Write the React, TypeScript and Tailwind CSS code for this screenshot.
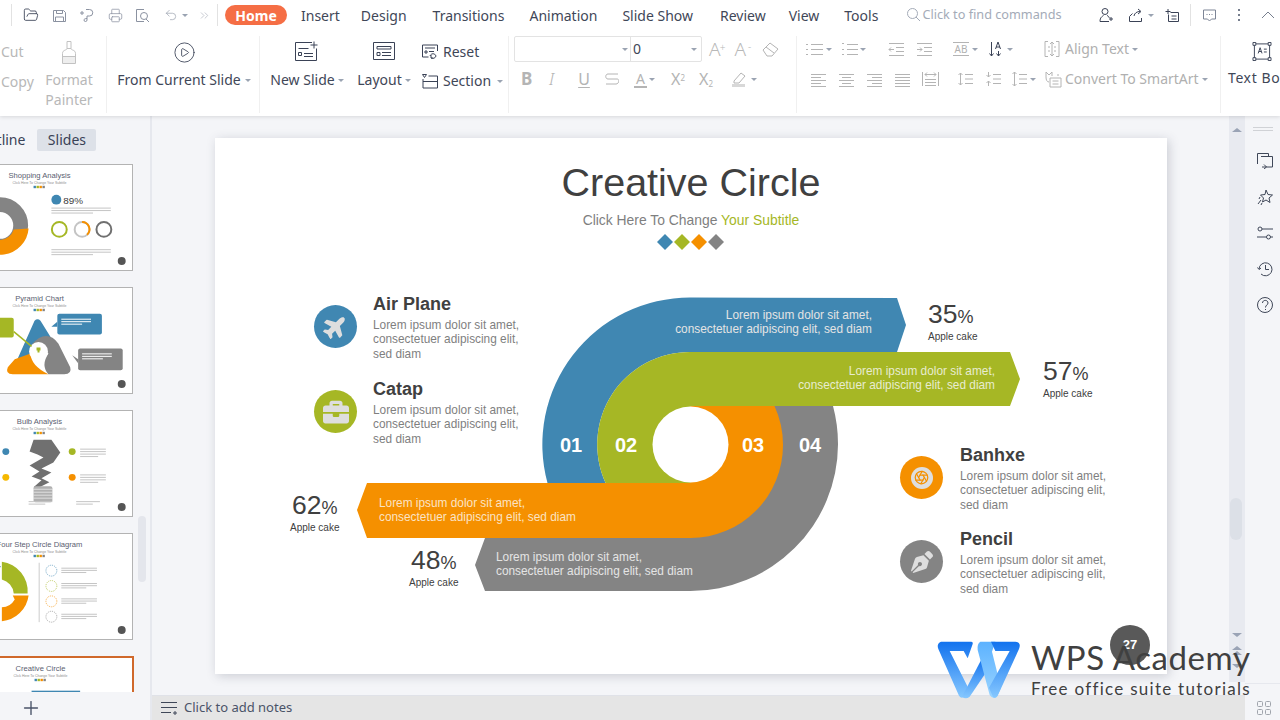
import { Aperture, ChevronsRight, CirclePlay, FolderOpen, Plus, Printer, Undo2 } from "lucide-react";
import { FaBriefcase, FaPenNib, FaPlane } from "react-icons/fa";
import type { ReactNode } from "react";

const SANS = "font-['Liberation_Sans',Arial,sans-serif]";
const LOREM_SHORT = ["Lorem ipsum dolor sit amet,", "consectetuer adipiscing elit, sed diam"];

function Caret({ className = "" }: { className?: string }) {
  return <span className={`inline-block w-0 h-0 border-x-[3px] border-x-transparent border-t-[3px] border-t-[#9aa3b2] ${className}`} />;
}

// small line icon, 16 box unless told otherwise
function Ic({ w = 16, h = 16, box, className = "", children }: { w?: number; h?: number; box?: string; className?: string; children: ReactNode }) {
  return (
    <svg width={w} height={h} viewBox={box ?? `0 0 ${w} ${h}`} fill="none" stroke="currentColor" strokeWidth="1" className={`shrink-0 ${className}`}>
      {children}
    </svg>
  );
}

function Lines({ rows, w = 16 }: { rows: [number, number, number][]; w?: number }) {
  return (
    <Ic w={w} h={16} className="text-[#b4b4b4]">
      {rows.map(([x1, x2, y]) => (
        <path key={`${x1}-${y}`} d={`M${x1} ${y}.5H${x2}`} />
      ))}
    </Ic>
  );
}

function Tabs() {
  const tabs: [string, string][] = [
    ["Insert", "ml-[14px]"],
    ["Design", "ml-[21px]"],
    ["Transitions", "ml-[26px]"],
    ["Animation", "ml-[25px]"],
    ["Slide Show", "ml-[25px]"],
    ["Review", "ml-[27px]"],
    ["View", "ml-[23px]"],
    ["Tools", "ml-[25px]"],
  ];
  return (
    <div className="flex items-center h-[30px] text-[14px] text-[#3f4758]">
      <div className="w-[12px] h-[22px] border-r border-[#e2e2e2]" />
      <div className="flex items-center gap-[12.500px] ml-[11px] text-[#3a4256]">
        <FolderOpen size={16} strokeWidth={1.3} />
        <Ic w={15} h={15} className="text-[#8b92a1]">
          <path d="M1.5 2.5h10l2 2v9h-12zM4.5 2.5v3h6v-3M3.5 13.500v-4.500h8v4.500" />
        </Ic>
        <Ic w={16} h={16} className="text-[#8b92a1]">
          <path d="M7 2.500h3.500a3 3 0 0 1 0 6.500H8v4a1.500 1.500 0 0 1-3 0c0-1 1-1.500 3-1.500M1 6h4M3 4v4" />
        </Ic>
        <Printer size={15} strokeWidth={1.2} className="text-[#8b92a1]" />
        <Ic w={15} h={15} className="text-[#8b92a1]">
          <path d="M9 1.500H1.500v12H9M14 14l-3-3" />
          <circle cx="9" cy="8" r="3.500" />
        </Ic>
      </div>
      <Undo2 size={14} strokeWidth={1.2} className="ml-[14px] text-[#9aa1ae]" />
      <Caret className="ml-[4px]" />
      <ChevronsRight size={13} strokeWidth={1} className="ml-[10px] text-[#9aa1ae]" />
      <div className="w-px h-[22px] bg-[#e2e2e2] ml-[6px]" />
      <div className="ml-[7px] w-[62px] h-[20px] rounded-full bg-[#f56e45] text-white font-bold flex items-center justify-center">Home</div>
      {tabs.map(([name, gap]) => (
        <span key={name} className={gap}>{name}</span>
      ))}
      <div className="flex items-center ml-[28px] text-[12.700px] text-[#a4abb8]">
        <Ic w={15} h={15} className="text-[#a4abb8]">
          <circle cx="6.500" cy="6.500" r="5" />
          <path d="M10 10l4 4" />
        </Ic>
        <span className="ml-px">Click to find commands</span>
      </div>
      <div className="flex items-center ml-auto text-[#3a4256]">
        <Ic w={16} h={16}>
          <circle cx="7" cy="4.500" r="3" />
          <path d="M2 14.500c0-4 2-5 3.500-6M9 8.500c1.500.5 2 1.500 2.300 2.500M2 14.500h9M13 10v4M11 12h4" />
        </Ic>
        <Ic w={16} h={16} className="ml-[14px]">
          <path d="M1.500 14.500v-5l3-3M1.500 14.500h12V11M6 9c.5-3 3-4.500 6-4.500M10 2l3 2.500L10 7" />
        </Ic>
        <Caret className="ml-[4px]" />
        <Ic w={15} h={15} className="ml-[11px]">
          <path d="M5.500 4.500h8v9h-10v-7M6.500 8h5M6.500 11h5M3 1v5M.5 3.500h5" />
        </Ic>
        <div className="w-px h-[22px] bg-[#e2e2e2] ml-[10px]" />
        <Ic w={15} h={15} className="ml-[11px] text-[#7d8596]">
          <path d="M1.500 2h12v9h-4l-2 2-2-2h-4z" />
          <path d="M4.500 6.500h1M7 6.500h1M9.500 6.500h1" />
        </Ic>
        <span className="ml-[21px] flex flex-col gap-[3px]">
          <span className="w-[2px] h-[2px] bg-[#767e8e]" />
          <span className="w-[2px] h-[2px] bg-[#767e8e]" />
          <span className="w-[2px] h-[2px] bg-[#767e8e]" />
        </span>
        <Ic w={14} h={14} className="ml-[21px] mr-[5px] text-[#767e8e]">
          <path d="M1 10l6-6 6 6" />
        </Ic>
      </div>
    </div>
  );
}

function Ribbon() {
  const dim = "text-[#b8b8b8]";
  return (
    <div className="flex h-[86px] text-[14px] leading-[20px] text-[#3f4758] pt-[6px] pb-[3px]">
      {/* clipboard */}
      <div className={`flex w-[107px] shrink-0 border-r border-[#f0f0f0] ${dim}`}>
        <div className="w-[42px] pl-px pt-[6px]">
          <div>Cut</div>
          <div className="mt-[10px]">Copy</div>
        </div>
        <div className="w-[54px] flex flex-col items-center pt-[5px]">
          <Ic w={16} h={24} className="text-[#c2c2c2]">
            <path d="M6 .5h4v7H6zM6 7.500c0 2-4.500 1-4.500 5v10h13v-10c0-4-4.500-3-4.500-5M1.500 15.500h13" />
            <path d="M2 16h12v6H2z" fill="#eeeeee" stroke="none" />
          </Ic>
          <div className="mt-[5px] text-center">Format<br />Painter</div>
        </div>
      </div>
      {/* from current slide */}
      <div className="flex flex-col items-center w-[153px] shrink-0 border-r border-[#f0f0f0] pl-[2px]">
        <CirclePlay size={23} strokeWidth={0.9} className="text-[#3a4256] mt-[5px]" />
        <div className="mt-[6px] flex items-center">From Current Slide<Caret className="ml-[4px]" /></div>
      </div>
      {/* slides */}
      <div className="flex w-[249px] shrink-0 border-r border-[#f0f0f0]">
        <div className="flex flex-col items-center w-[86px] pl-[8px] pt-[5px]">
          <Ic w={24} h={20} className="text-[#3a4256]">
            <path d="M17 1.500H.5v18h21v-12M3.500 7.500h10M3.500 11.500h3v3h-3zM9 12.500h9M9 15.500h9" />
            <path d="M19 .5v7M15.500 4h7" />
          </Ic>
          <div className="mt-[9px] flex items-center whitespace-nowrap">New Slide<Caret className="ml-[3px]" /></div>
        </div>
        <div className="flex flex-col items-center w-[64px] pl-[12px] pt-[6px]">
          <Ic w={22} h={18} className="text-[#3a4256]">
            <path d="M.5.5h21v17H.5zM4 4.500h14v2.500H4zM4 10.500h3v3H4zM9 10.500h9M9 13.500h9" />
          </Ic>
          <div className="mt-[10px] flex items-center">Layout<Caret className="ml-[3px]" /></div>
        </div>
        <div className="pl-[12px] pt-[6px]">
          <div className="flex items-center gap-[5px]">
            <Ic w={16} h={16} className="text-[#3a4256]">
              <path d="M15.500 7V1H.5v12h6M3 4h10M3 7h2v2H3zM7 7.500h5M8 12c1-3 5-3 6 0-.5 2-3 3-5 2M9 11v3h2" />
            </Ic>
            Reset
          </div>
          <div className="flex items-center gap-[5px] mt-[9px]">
            <Ic w={16} h={16} className="text-[#3a4256]">
              <path d="M.5 1.500h4L2.500 4.500zM6.500 3h9v12H1V6M1 8.500h14" />
            </Ic>
            Section<Caret className="ml-[1px]" />
          </div>
        </div>
      </div>
      {/* font */}
      <div className="w-[288px] shrink-0 border-r border-[#f0f0f0] pl-[5px] text-[#b0b0b0]">
        <div className="flex items-center">
          <div className="flex w-[188px] h-[26px] border border-[#e3e3e3] rounded-[2px]">
            <div className="w-[116px] border-r border-[#e3e3e3] flex items-center justify-end pr-[2px]"><Caret /></div>
            <div className="flex-1 flex items-center justify-between pl-[2px] pr-[4px] text-[14px] text-[#3f4758]">0<Caret /></div>
          </div>
          <span className={`ml-[7px] text-[19px] font-light ${dim} relative`}>A<span className="absolute -top-[2px] -right-[5px] text-[10px]">+</span></span>
          <span className={`ml-[14px] text-[19px] font-light ${dim} relative`}>A<span className="absolute -top-[3px] -right-[5px] text-[10px]">-</span></span>
          <Ic w={17} h={15} className="ml-[16px] text-[#b4b4b4]">
            <path d="M1 8l7-7 8 6-6 7H5zM4 5l8 6" />
          </Ic>
        </div>
        <div className="flex items-center mt-[3px] h-[28px] text-[#b4b4b4]">
          <span className="w-[26px] pl-[7px] text-[17px] font-bold">B</span>
          <span className="w-[30px] pl-[9px] text-[17px] italic font-light">I</span>
          <span className="w-[28px] text-center text-[16px] underline underline-offset-[2px]">U</span>
          <span className="w-[28px] flex justify-center">
            <Ic w={14} h={14}><path d="M13 2H3c-3 0-3 5 0 5h9c3 0 2 5-1 5H1" /></Ic>
          </span>
          <span className="flex items-center w-[36px] pl-[8px]">
            <span className="text-[14px] border-b-[2px] border-[#b4b4b4] leading-[15px] px-[2px]">A</span>
            <Caret className="ml-[2px]" />
          </span>
          <span className="w-[28px] text-center text-[16px] ml-[2px]">X<sup className="text-[8px]">2</sup></span>
          <span className="w-[28px] text-center text-[16px]">X<sub className="text-[8px]">2</sub></span>
          <Ic w={17} h={16} className="ml-[11px]">
            <path d="M3 10l7-8 4 3-6 7H3zM1 15.500h13" />
            <path d="M1 13h13v3H1z" fill="#d8d8d8" stroke="none" />
          </Ic>
          <Caret className="ml-[3px]" />
        </div>
      </div>
      {/* paragraph */}
      <div className="w-[424px] shrink-0 border-r border-[#f0f0f0] text-[#b0b0b0]">
        <div className="flex items-center h-[26px]">
          <span className="ml-[8px]"><Lines w={18} rows={[[6, 18, 3], [6, 18, 8], [6, 18, 13], [1, 3, 3], [1, 3, 8], [1, 3, 13]]} /></span>
          <Caret className="ml-[3px]" />
          <span className="ml-[9px]"><Lines w={17} rows={[[6, 17, 3], [6, 17, 8], [6, 17, 13], [1, 3, 2], [1, 3, 8], [1, 3, 13]]} /></span>
          <Caret className="ml-[2px]" />
          <span className="ml-[22px]"><Ic w={16} h={16} className="text-[#b4b4b4]"><path d="M1 2.500h15M8 6.500h8M8 10.500h8M1 14.500h15M6 8.500H1M3 6.500l-2 2 2 2" /></Ic></span>
          <span className="ml-[12px]"><Ic w={16} h={16} className="text-[#b4b4b4]"><path d="M1 2.500h15M8 6.500h8M8 10.500h8M1 14.500h15M1 8.500h5M4 6.500l2 2-2 2" /></Ic></span>
          <span className="ml-[21px] w-[16px] border-y border-[#b4b4b4] text-[10px] leading-[12px] text-center">AB</span>
          <Caret className="ml-[3px]" />
          <span className="ml-[11px]">
            <Ic w={15} h={16} className="text-[#3a4256]"><path d="M2.500 1v14M.5 12.500l2 2.500 2-2.500M9 1l-2.500 7M9 1l2.500 7M7 6h4M9.500 10v5M7.500 12.500l2 2.500 2-2.500" /></Ic>
          </span>
          <Caret className="ml-[3px] border-t-[#5a6376]" />
          <span className="ml-[31px]"><Ic w={16} h={18} className="text-[#b4b4b4]"><path d="M4 1.500H1v15h3M12 1.500h3v15h-3M8 2v14M6 4l2-2 2 2M6 14l2 2 2-2M4 7h2M10 7h2M4 11h2M10 11h2" /></Ic></span>
          <span className="ml-[5px] text-[14px]">Align Text</span>
          <Caret className="ml-[3px]" />
        </div>
        <div className="flex items-center h-[28px] mt-[3px]">
          <span className="ml-[13px]"><Lines rows={[[1, 16, 3], [1, 11, 6], [1, 16, 9], [1, 11, 12], [1, 16, 15]]} /></span>
          <span className="ml-[12px]"><Lines rows={[[1, 16, 3], [4, 13, 6], [1, 16, 9], [4, 13, 12], [1, 16, 15]]} /></span>
          <span className="ml-[12px]"><Lines rows={[[1, 16, 3], [6, 16, 6], [1, 16, 9], [6, 16, 12], [1, 16, 15]]} /></span>
          <span className="ml-[12px]"><Lines rows={[[1, 16, 3], [1, 16, 6], [1, 16, 9], [1, 16, 12], [1, 16, 15]]} /></span>
          <span className="ml-[12px]"><Ic w={17} h={16} className="text-[#b4b4b4]"><path d="M.5 1v14M16.500 1v14M3 8.500h11M3 11.500h11M3 14.500h11M3 3.500h11M5 1.500l-2 2 2 2M12 1.500l2 2-2 2" /></Ic></span>
          <span className="ml-[19px]"><Ic w={15} h={16} className="text-[#b4b4b4]"><path d="M2.500 2v12M.5 4l2-2 2 2M.5 12l2 2 2-2M7 3.500h8M7 8h8M7 12.500h8" /></Ic></span>
          <span className="ml-[13px]"><Ic w={15} h={16} className="text-[#b4b4b4]"><path d="M2.500 1v5M.5 4l2 2 2-2M2.500 10v5M.5 12l2-2 2 2M7 3.500h8M7 8h8M7 12.500h8" /></Ic></span>
          <span className="ml-[11px]"><Ic w={15} h={16} className="text-[#b4b4b4]"><path d="M2.500 1v14M.5 3l2-2 2 2M.5 13l2 2 2-2M7 3.500h8M7 8h8M7 12.500h8" /></Ic></span>
          <Caret className="ml-[3px]" />
          <span className="ml-[9px]"><Ic w={17} h={17} className="text-[#b4b4b4]"><path d="M1 6V1l3 3 3-3v4M13 5V3M5 7h11v9H5V7M7.500 10h6M7.500 13h6M1 6c0 3 1 5 3 5" /></Ic></span>
          <span className="ml-[3px] text-[14px] whitespace-nowrap">Convert To SmartArt</span>
          <Caret className="ml-[3px]" />
        </div>
      </div>
      {/* text box, cut off by the window */}
      <div className="flex flex-col items-start pl-[7px] w-[59px] overflow-hidden">
        <Ic w={20} h={19} className="ml-[24px] text-[#3a4256] mt-[6px]" box="0 0 20 20">
          <path d="M2 2h16v16H2z" />
          <path d="M.5.5h3v3h-3zM16.500.5h3v3h-3zM.5 16.500h3v3h-3zM16.500 16.500h3v3h-3z" fill="#ffffff" />
          <path d="M6 12l2-6 2 6M6.700 10h2.600M12 7.500h3M12 10.500h3" />
        </Ic>
        <div className="mt-[7px] whitespace-nowrap tracking-[0.600px]">Text Box</div>
      </div>
    </div>
  );
}

function ThumbHead({ title, x = 93 }: { title: string; x?: number }) {
  const dots = ["#3f87b2", "#a5b725", "#f59000", "#848484"];
  return (
    <>
      <text x={x} y="13" textAnchor="middle" fontSize="7.700" fill="#5a6070" fontFamily="Liberation Sans">{title}</text>
      <text x={x} y="19" textAnchor="middle" fontSize="3.500" fill="#8c8c8c" fontFamily="Liberation Sans">Click Here To Change Your Subtitle</text>
      {dots.map((c, i) => (
        <rect key={c} x={x - 6 + i * 3} y="21" width="2.400" height="2.400" fill={c} />
      ))}
    </>
  );
}

function Greeked({ x, y, w, n = 3, gap = 2.500, c = "#c4c4c4" }: { x: number; y: number; w: number; n?: number; gap?: number; c?: string }) {
  return (
    <>
      {Array.from({ length: n }, (_, i) => (
        <rect key={i} x={x} y={y + i * gap} width={i === n - 1 ? w * 0.7 : w} height="1" fill={c} />
      ))}
    </>
  );
}

function Thumb({ active, children }: { active?: boolean; children: ReactNode }) {
  return (
    <div className={`h-[107px] bg-white shrink-0 ${active ? "border-2 border-[#d0692b] w-[188px]" : "border border-[#b3b3b3] w-[187px]"}`}>
      <svg viewBox="0 0 186 106" width="185" height="105" className="block">
        {children}
        <circle cx="176" cy="97" r="4" fill="#555555" />
      </svg>
    </div>
  );
}

function Sidebar() {
  return (
    <aside className="relative w-[152px] shrink-0 flex flex-col bg-[#f4f5f8] border-r-2 border-[#e6e8ee] overflow-hidden">
      <div className="flex items-start h-[48px] pt-[13px] -ml-[23px] gap-[12px] text-[14px] text-[#3a4256] shrink-0">
        <span className="leading-[22px]">Outline</span>
        <span className="w-[59px] h-[22px] leading-[22px] text-center bg-[#dde1e8] rounded-[2px]">Slides</span>
      </div>
      <div className="flex-1 overflow-hidden -ml-[54px] flex flex-col gap-[16px]">
        <Thumb>
          <ThumbHead title="Shopping Analysis" />
          <circle cx="53" cy="61" r="21" fill="none" stroke="#848484" strokeWidth="15" />
          <path d="M82 64a29 29 0 0 1-56 8l13-5a15 15 0 0 0 28-2z" fill="#f59000" />
          <circle cx="110" cy="35" r="5" fill="#3f87b2" />
          <text x="117" y="39" fontSize="10" fill="#404040" fontFamily="Liberation Sans">89%</text>
          <Greeked x={105} y={43} w={60} />
          <circle cx="113" cy="65" r="7.500" fill="none" stroke="#a5b725" strokeWidth="2" />
          <circle cx="136" cy="65" r="7.500" fill="none" stroke="#c4c4c4" strokeWidth="2" />
          <path d="M136 57.500a7.500 7.500 0 0 1 5 13" fill="none" stroke="#f59000" strokeWidth="2" />
          <circle cx="158" cy="65" r="7.500" fill="none" stroke="#707070" strokeWidth="2" />
          <Greeked x={105} y={85} w={60} />
        </Thumb>
        <Thumb>
          <ThumbHead title="Pyramid Chart" />
          <path d="M88 33Q91 30 94 33L112 62L92 64L68 78Z" fill="#3f87b2" />
          <path d="M68 72L84 66Q84 78 102 87L66 87Q58 87 61 80Z" fill="#f59000" />
          <path d="M84 58Q100 40 112 56L124 80Q126 87 118 87L102 87Q94 78 102 66Q96 58 84 58Z" fill="#848484" />
          <circle cx="92" cy="64" r="9.500" fill="#ffffff" />
          <path d="M90 60h4v3h-1v2h-2v-2h-1z" fill="#a5b725" />
          <path d="M53 30h12q2 0 2 2v16q0 2-2 2H53z" fill="#a5b725" />
          <path d="M67 44l18 15" stroke="#a5b725" strokeWidth="1.500" />
          <rect x="111" y="26" width="45" height="21" rx="2" fill="#3f87b2" />
          <path d="M111 34l-6 5h6z" fill="#3f87b2" />
          <Greeked x={115} y={31} w={30} c="#ffffff" />
          <rect x="132" y="61" width="45" height="22" rx="2" fill="#848484" />
          <path d="M132 72l-6-4 6 8z" fill="#848484" />
          <Greeked x={136} y={66} w={30} c="#ffffff" />
        </Thumb>
        <Thumb>
          <ThumbHead title="Bulb Analysis" />
          <path d="M87 29h18l9 13-7 10-12 6 10 4-10 6 8 4-10 5H87l8-7-10-4 8-5-10-6 14-8-6-3-8-3z" fill="#707070" />
          <rect x="87" y="76" width="19" height="16" rx="2" fill="#b0b0b0" />
          <path d="M87 79h19M87 82h19M87 85h19M87 88h19" stroke="#ffffff" strokeWidth="0.600" />
          <circle cx="59" cy="41" r="3.500" fill="#3f87b2" />
          <circle cx="59" cy="67" r="3.500" fill="#f5b800" />
          <circle cx="126" cy="41" r="3.500" fill="#a5b725" />
          <circle cx="126" cy="67" r="3.500" fill="#f59000" />
          <Greeked x={134} y={38} w={26} n={4} />
          <Greeked x={134} y={64} w={26} n={4} />
          <Greeked x={82} y={91} w={24} n={2} />
          <Greeked x={130} y={91} w={24} n={2} />
        </Thumb>
        <Thumb>
          <ThumbHead title="Four Step Circle Diagram" />
          <path d="M55 28a30 30 0 0 1 26 32l-14 0a16 16 0 0 0-12-14z" fill="#a5b725" />
          <path d="M82 62a30 30 0 0 1-27 26l0-14a16 16 0 0 0 13-8l-2-4z" fill="#f59000" />
          <path d="M48 27l6 6-6 6z" fill="#3f87b2" />
          <rect x="92" y="29" width="1.500" height="60" fill="#dddddd" />
          {["#3f87b2", "#a5b725", "#f59000", "#848484"].map((c, i) => (
            <g key={c}>
              <circle cx="105" cy={37 + i * 15.500} r="5.500" fill="none" stroke={c} strokeWidth="0.700" strokeDasharray="1 1" />
              <Greeked x={115} y={34 + i * 15.500} w={36} n={3} gap={2.200} />
            </g>
          ))}
        </Thumb>
        <Thumb active>
          <ThumbHead title="Creative Circle" />
          <rect x="84" y="33" width="49" height="20" fill="#3f87b2" />
        </Thumb>
      </div>
      <div className="absolute left-[138px] top-[400px] w-[8px] h-[66px] rounded-full bg-[#e4e6ec]" />
      <div className="h-[28px] shrink-0 bg-[#f4f5f8] flex items-center pl-[20px] pt-[4px] relative">
        <Plus size={22} strokeWidth={1.500} className="text-[#4a5368]" />
      </div>
    </aside>
  );
}

function Feature({ pos, color, title, icon, textGap = "ml-[16px]" }: { pos: string; color: string; title: string; icon: ReactNode; textGap?: string }) {
  return (
    <div className={`absolute flex items-center ${pos}`}>
      <div className={`w-[43px] h-[43px] rounded-full flex items-center justify-center text-[#dedede] ${color}`}>{icon}</div>
      <div className={`${textGap} text-[11.850px] leading-[14.400px] text-[#7f7f7f] whitespace-nowrap`}>
        <div className="text-[18px] leading-[24px] font-bold text-[#404040]">{title}</div>
        <div className="mt-[2px]">Lorem ipsum dolor sit amet,</div>
        <div>consectetuer adipiscing elit,</div>
        <div>sed diam</div>
      </div>
    </div>
  );
}

function Stat({ pos, value, center }: { pos: string; value: string; center?: boolean }) {
  return (
    <div className={`absolute flex flex-col text-[#404040] whitespace-nowrap ${center ? "items-center" : "items-start"} ${pos}`}>
      <div className="text-[26.500px] leading-[34px]">{value}<span className="text-[18px]">%</span></div>
      <div className="text-[10px] leading-[12px] -mt-[3px]">Apple cake</div>
    </div>
  );
}

function Slide() {
  return (
    <div className={`relative w-[952px] h-[536px] ml-[63px] mt-[22px] bg-white shadow-[2px_2px_10px_rgba(60,65,85,0.22)] shrink-0 ${SANS}`}>
      <div className="flex flex-col items-center pt-[20px]">
        <div className="text-[39.500px] leading-[48px] text-[#404040]">Creative Circle</div>
        <div className="text-[13.900px] leading-[20px] mt-[4px] text-[#7f7f7f]">Click Here To Change <span className="text-[#a5b725]">Your Subtitle</span></div>
        <svg width="68" height="16" viewBox="0 0 68 16" className="mt-[4px]">
          <path d="M8 0l8 8-8 8-8-8z" fill="#3f87b2" />
          <path d="M25 0l8 8-8 8-8-8z" fill="#a5b725" />
          <path d="M42 0l8 8-8 8-8-8z" fill="#f59000" />
          <path d="M59 0l8 8-8 8-8-8z" fill="#848484" />
        </svg>
      </div>

      {/* chart, coordinates are the window's */}
      <svg className="absolute inset-0" width="952" height="536" viewBox="215 138 952 536">
        <path d="M485 538L475 565L485 591L690.500 591A147.500 147 0 0 0 838 444.500A147.500 147 0 0 0 833 406L690 406V538Z" fill="#848484" />
        <path d="M897 298L906 325L897 352L690.500 352A92.500 92.500 0 0 0 605.600 483L547.500 483A147.500 147 0 0 1 690.500 297.500Z" fill="#4087b2" />
        <path d="M367 483L357 510L367 538L690.500 538A92.500 93 0 0 0 783 444.500A92.500 93 0 0 0 774.500 406L690 406V483Z" fill="#f59000" />
        <path d="M1010 352L1020 379L1010 406L690.500 406V483L605.600 483A92.500 92.500 0 0 1 690.500 352Z" fill="#a6b725" />
        <circle cx="690.500" cy="444.500" r="38" fill="#ffffff" />
        <path d="M600 483H690.500V484H600Z" fill="#f59000" />
      </svg>

      <div className="absolute right-[295px] top-[170px] text-right text-[11.850px] leading-[14.400px] text-[#e4e4e4] whitespace-nowrap">
        {LOREM_SHORT.map((l) => <div key={l}>{l}</div>)}
      </div>
      <div className="absolute right-[172px] top-[226px] text-right text-[11.850px] leading-[14.400px] text-[#e8ecd0] whitespace-nowrap">
        {LOREM_SHORT.map((l) => <div key={l}>{l}</div>)}
      </div>
      <div className="absolute left-[164px] top-[358px] text-[11.850px] leading-[14.400px] text-[#fbe3c4] whitespace-nowrap">
        {LOREM_SHORT.map((l) => <div key={l}>{l}</div>)}
      </div>
      <div className="absolute left-[281px] top-[412px] text-[11.850px] leading-[14.400px] text-[#e4e4e4] whitespace-nowrap">
        {LOREM_SHORT.map((l) => <div key={l}>{l}</div>)}
      </div>

      <span className="absolute left-[341px] top-[295px] w-[30px] text-center text-[20px] leading-[24px] font-bold text-white">01</span>
      <span className="absolute left-[396px] top-[295px] w-[30px] text-center text-[20px] leading-[24px] font-bold text-white">02</span>
      <span className="absolute left-[523px] top-[295px] w-[30px] text-center text-[20px] leading-[24px] font-bold text-white">03</span>
      <span className="absolute left-[580px] top-[295px] w-[30px] text-center text-[20px] leading-[24px] font-bold text-white">04</span>

      <Stat pos="left-[713px] top-[159px]" value="35" />
      <Stat pos="left-[828px] top-[216px]" value="57" />
      <Stat pos="left-[75px] top-[350px]" value="62" center />
      <Stat pos="left-[194px] top-[405px]" value="48" center />

      <Feature pos="left-[99px] top-[154px]" color="bg-[#4087b2]" title="Air Plane" icon={<FaPlane size={25} className="-rotate-45" />} />
      <Feature pos="left-[99px] top-[239px]" color="bg-[#a6b725]" title="Catap" icon={<FaBriefcase size={26} />} />
      <Feature pos="left-[685px] top-[305px]" color="bg-[#f59000]" title="Banhxe" textGap="ml-[17px]" icon={
        <span className="w-[22px] h-[22px] rounded-full bg-[#dedede] flex items-center justify-center text-[#f59000]"><Aperture size={15} strokeWidth={2} /></span>
      } />
      <Feature pos="left-[685px] top-[389px]" color="bg-[#848484]" title="Pencil" textGap="ml-[17px]" icon={<FaPenNib size={22} />} />

      <div className="absolute left-[895px] top-[487px] w-[40px] h-[40px] rounded-full bg-[#595959] text-white text-[13px] font-bold flex items-center justify-center">27</div>
    </div>
  );
}

function RightPanel() {
  return (
    <aside className="w-[35px] shrink-0 bg-[#f4f5f8] flex flex-col items-center text-[#3f4758]">
      <div className="mt-[11px] w-[20px] h-[4px] border-y border-[#d0d2d6]" />
      <div className="flex flex-col items-center gap-[20px] mt-[22px] ml-[5px]">
        <Ic w={16} h={16}><path d="M.5 11V.5h11V3M4 3.500h11.500V14H5M7 11.500l2.500 2.500L7 16" /></Ic>
        <Ic w={16} h={16}><path d="M9 1l2 4.500 4.500.5-3.500 3 1 4.500-4-2.500-3.500 2 1-4-3-3 4.500-.5zM1 15l3-4M4 16l1-2M2 10l1-2" /></Ic>
        <Ic w={16} h={16}>
          <circle cx="3" cy="4" r="2" /><path d="M5 4h11" />
          <circle cx="11.500" cy="12" r="2" /><path d="M0 12h9.500M13.500 12h2.500" />
        </Ic>
        <Ic w={16} h={16}>
          <path d="M2 8a6.500 6.500 0 1 1 2 5M.5 6.500L2 8.500l2-1.500M8.500 4v4.500h3.500" />
        </Ic>
        <Ic w={16} h={16}>
          <circle cx="8" cy="8" r="7.500" />
          <path d="M5.500 6c0-3.500 5.500-3.500 5.500 0 0 2-2.500 2-2.500 4.500M8.500 12v1" />
        </Ic>
      </div>
      <div className="mt-auto w-full border-t border-[#e6e8ee] h-[37px] flex items-end justify-center pb-[5px] pl-[3px]">
        <Ic w={14} h={14} className="text-[#a0a4ac]">
          <rect x=".5" y=".5" width="5" height="5" rx="1" />
          <rect x="8.500" y=".5" width="5" height="5" rx="1" />
          <rect x=".5" y="8.500" width="5" height="5" rx="1" />
          <rect x="8.500" y="8.500" width="5" height="5" rx="1" />
        </Ic>
      </div>
    </aside>
  );
}

function Scrollbar() {
  const up = "w-0 h-0 border-x-[5px] border-x-transparent border-b-[4px] border-b-[#9aa3b5]";
  const down = "w-0 h-0 border-x-[5px] border-x-transparent border-t-[4px] border-t-[#9aa3b5]";
  return (
    <div className="w-[16px] shrink-0 flex flex-col">
      <div className="flex-1 bg-[#e8eaf0] relative flex flex-col items-center pt-[12px]">
        <span className={up} />
        <div className="absolute left-[1px] top-[382px] w-[12px] h-[42px] rounded-full bg-[#dce0e7]" />
        <div className="mt-auto flex flex-col items-center pb-[14px]">
          <span className={down} />
          <span className={`${up} mt-[9px]`} />
          <span className={`${up} mt-[1px]`} />
          <span className={`${down} mt-[9px]`} />
        </div>
      </div>
      <div className="h-[13px]" />
    </div>
  );
}

export default function App() {
  return (
    <div className="relative w-[1280px] h-[720px] overflow-hidden flex flex-col bg-[#f4f5f8] font-['Noto_Sans',sans-serif]">
      <header className="h-[116px] shrink-0 bg-white shadow-[0_1px_4px_rgba(0,0,0,0.12)] z-10">
        <Tabs />
        <Ribbon />
      </header>
      <div className="flex flex-1 min-h-0">
        <Sidebar />
        <div className="flex-1 min-w-0 flex flex-col">
          <div className="flex flex-1 min-h-0">
            <main className="flex-1 min-w-0 overflow-visible">
              <Slide />
            </main>
            <Scrollbar />
          </div>
          <div className="h-[25px] shrink-0 bg-[#e5e5e5] border-t border-[#e0e2e8] flex items-center pl-[8px] text-[13px] text-[#4a5368]">
            <Ic w={17} h={15} className="text-[#3f4758]"><path d="M1 1.500h16M1 6.500h16M1 11.500h10M13 12h4M15 10v4" /></Ic>
            <span className="ml-[7px]">Click to add notes</span>
          </div>
        </div>
        <RightPanel />
      </div>

      {/* watermark sits over everything */}
      <div className="absolute left-[937px] top-[640px] flex z-20 pointer-events-none">
        <svg width="84" height="60" viewBox="170 95 252 180">
          <defs>
            <linearGradient id="wpsA" x1="0" y1="0" x2="0" y2="1">
              <stop offset="0" stopColor="#1272ee" />
              <stop offset="1" stopColor="#86c8ff" />
            </linearGradient>
            <linearGradient id="wpsB" x1="0" y1="0" x2="0" y2="1">
              <stop offset="0" stopColor="#5cb2ff" />
              <stop offset="1" stopColor="#9ad4ff" />
            </linearGradient>
          </defs>
          <path d="M182 100H272Q280 100 276 110L262 150L250 128H208L262 235L250 265Q243 272 236 262L174 122Q168 106 182 100Z" fill="url(#wpsA)" />
          <path d="M245 265L305 150L322 185L268 265Q256 275 245 265Z" fill="url(#wpsA)" />
          <path d="M300 100H345L335 130L362 238L350 265Q338 275 328 260L292 125Q290 105 300 100Z" fill="url(#wpsB)" />
          <path d="M405 100Q424 102 416 122L352 262Q345 272 338 266L326 238L388 128H345L332 100Z" fill="url(#wpsA)" />
        </svg>
        <div className="ml-[10px] text-[#404040] font-['Lato',sans-serif] whitespace-nowrap">
          <div className="text-[33px] leading-[35px] font-normal tracking-[0.600px]">WPS Academy</div>
          <div className="text-[17px] leading-[24px] tracking-[1.280px] mt-[2px]">Free office suite tutorials</div>
        </div>
      </div>
    </div>
  );
}
